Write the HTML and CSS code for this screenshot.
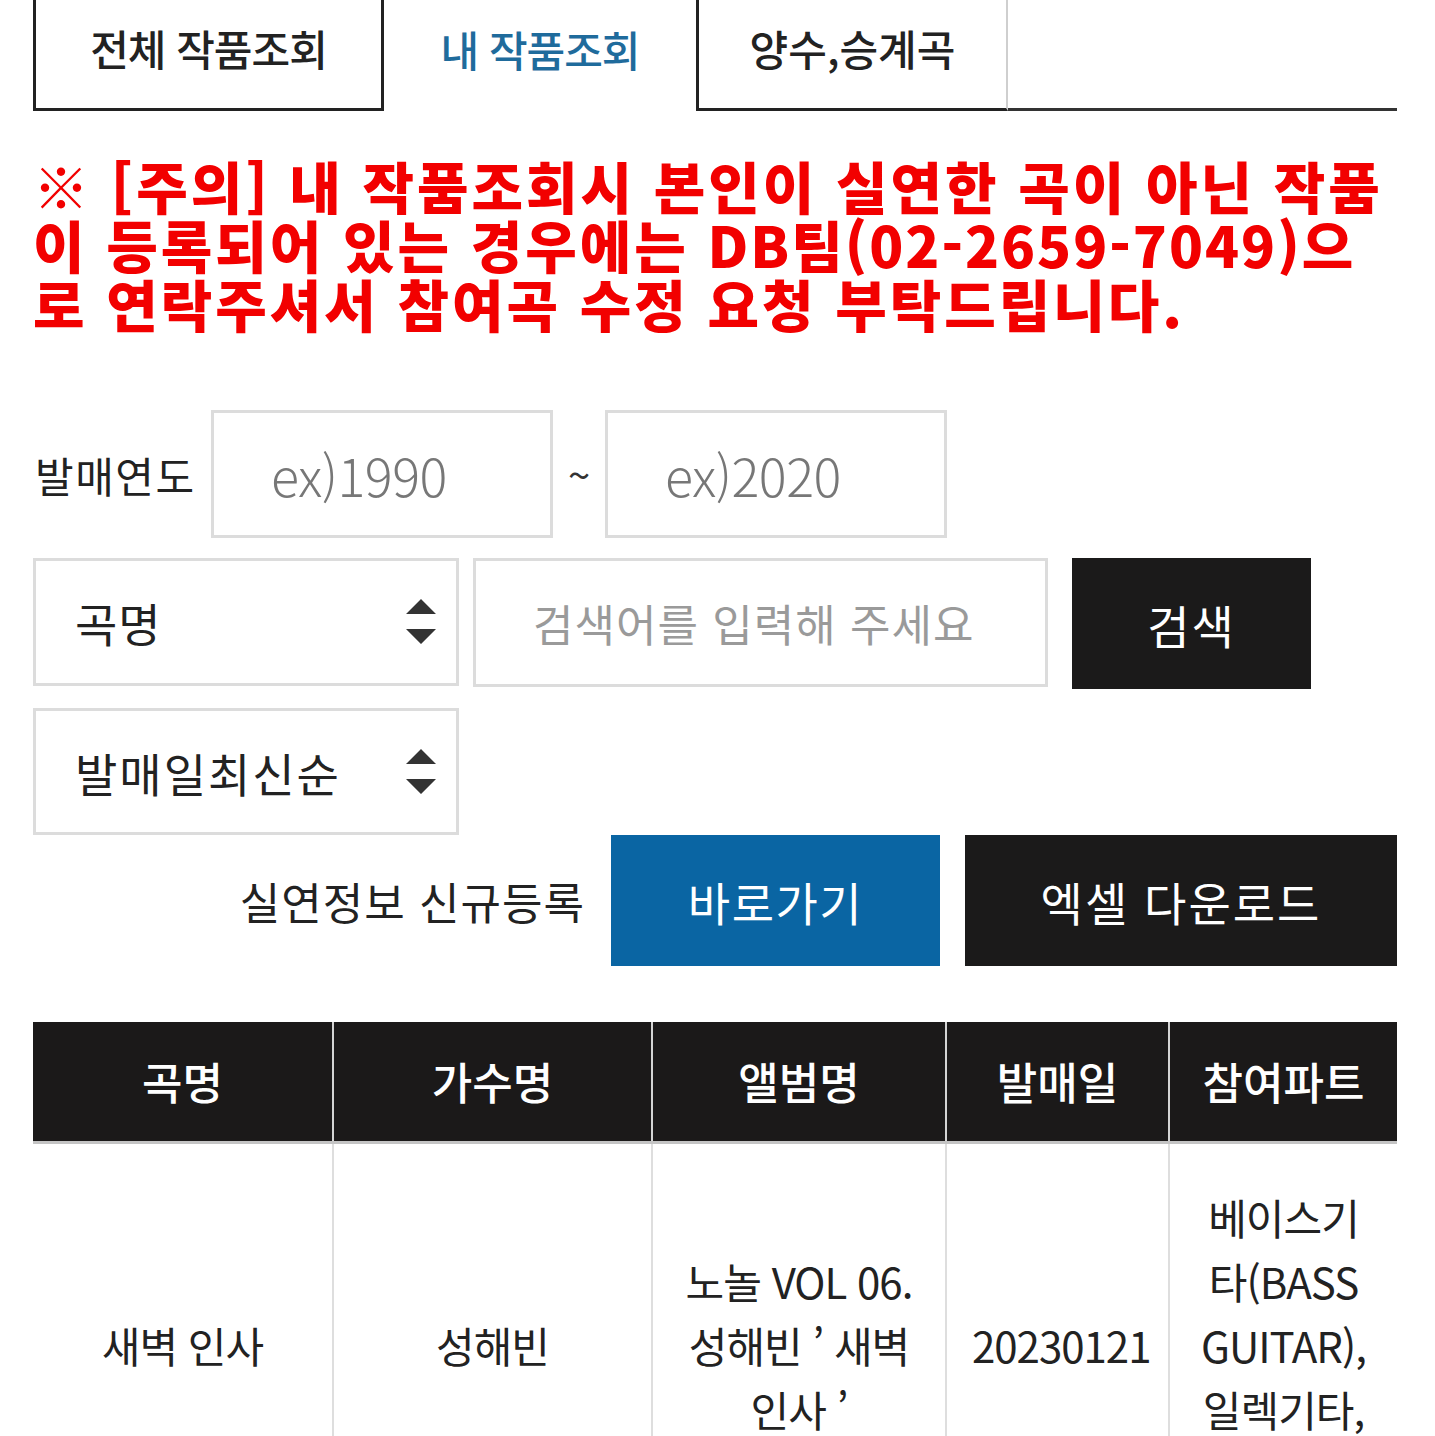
FILE: index.html
```html
<!DOCTYPE html>
<html lang="ko">
<head>
<meta charset="utf-8">
<title>내 작품조회</title>
<link rel="stylesheet" href="styles.css">
</head>
<body>
<div class="page">
  <nav class="tabs">
    <a class="tab tab-all" href="#">전체 작품조회</a>
    <a class="tab tab-mine" href="#">내 작품조회</a>
    <a class="tab tab-transfer" href="#">양수,승계곡</a>
    <span class="tab-fill"></span>
  </nav>

  <p class="notice">※ [주의] 내 작품조회시 본인이 실연한 곡이 아닌 작품이 등록되어 있는 경우에는 <span class="tel">DB팀(02-2659-7049)</span>으로 연락주셔서 참여곡 수정 요청 부탁드립니다.</p>

  <form class="search">
    <div class="row year-row">
      <label class="label">발매연도</label>
      <input class="field year" type="text" placeholder="ex)1990">
      <span class="tilde">~</span>
      <input class="field year" type="text" placeholder="ex)2020">
    </div>
    <div class="row row-keyword">
      <div class="select-wrap">
        <select class="select"><option>곡명</option><option>가수명</option><option>앨범명</option></select>
        <svg class="arrows" width="30" height="45" viewBox="0 0 30 45"><path d="M15 0 L30 15 H0 Z M0 30 H30 L15 45 Z" fill="#333"/></svg>
      </div>
      <input class="field keyword" type="text" placeholder="검색어를 입력해 주세요">
      <button class="btn btn-dark btn-search" type="button">검색</button>
    </div>
    <div class="row row-sort">
      <div class="select-wrap">
        <select class="select select-sort"><option>발매일최신순</option><option>발매일과거순</option></select>
        <svg class="arrows" width="30" height="45" viewBox="0 0 30 45"><path d="M15 0 L30 15 H0 Z M0 30 H30 L15 45 Z" fill="#333"/></svg>
      </div>
    </div>
    <div class="row actions">
      <span class="actions-label">실연정보 신규등록</span>
      <a class="btn btn-blue" href="#">바로가기</a>
      <a class="btn btn-dark btn-excel" href="#">엑셀 다운로드</a>
    </div>
  </form>

  <table class="list">
    <colgroup>
      <col class="c-title"><col class="c-artist"><col class="c-album"><col class="c-date"><col class="c-part">
    </colgroup>
    <thead>
      <tr><th>곡명</th><th>가수명</th><th>앨범명</th><th>발매일</th><th>참여파트</th></tr>
    </thead>
    <tbody>
      <tr>
        <td>새벽 인사</td>
        <td>성해빈</td>
        <td>노놀 VOL 06. 성해빈 ’ 새벽 인사 ’</td>
        <td>20230121</td>
        <td>베이스기타(BASS GUITAR), 일렉기타, 통기타</td>
      </tr>
    </tbody>
  </table>
</div>
</body>
</html>
```

FILE: styles.css
```css
* { box-sizing: border-box; }

body {
  margin: 0;
  background: #fff;
  color: #222;
  font-family: "Noto Sans CJK KR", "Noto Sans", sans-serif;
}

.page {
  padding: 0 38px 0 33px;
}

/* tabs */
.tabs {
  display: flex;
  height: 111px;
}

.tab {
  display: flex;
  align-items: center;
  justify-content: center;
  padding-bottom: 14px;
  font-size: 42px;
  font-weight: 500;
  letter-spacing: -1px;
  color: #222;
  text-decoration: none;
  border-bottom: 3px solid #222;
}

.tab-all {
  width: 351px;
  border-left: 3px solid #222;
  border-right: 3px solid #222;
}

.tab-mine {
  width: 312px;
  border-bottom: 0;
  color: #1f6b9c;
}

.tab-transfer {
  width: 312px;
  border-left: 3px solid #222;
  border-right: 2px solid #cfcfcf;
  letter-spacing: 0;
}

.tab-fill {
  flex: 1;
  border-bottom: 3px solid #333;
}

/* notice */
.notice {
  margin: 44px 0 0;
  color: #f20000;
  font-weight: 900;
  font-size: 56px;
  line-height: 59px;
  letter-spacing: 3px;
}

.notice .tel {
  letter-spacing: 2px;
}

/* search form */
.search {
  display: flex;
  flex-direction: column;
  margin-top: 78px;
}

.row {
  display: flex;
  align-items: flex-start;
}

.year-row {
  align-items: center;
  height: 128px;
}

.label {
  width: 178px;
  padding-left: 2px;
  font-size: 42px;
  letter-spacing: 1.5px;
  color: #222;
}

.field {
  height: 128px;
  border: 3px solid #dcdcdc;
  padding: 0 0 0 57px;
  font-family: inherit;
  color: #222;
  background: #fff;
  outline: none;
  border-radius: 0;
}

.field::placeholder {
  color: #777;
}

.year {
  width: 342px;
  font-size: 52px;
  font-weight: 300;
  letter-spacing: -0.5px;
}

.tilde {
  width: 52px;
  text-align: center;
  font-size: 40px;
  color: #333;
}

.row-keyword {
  margin-top: 20px;
}

.select-wrap {
  position: relative;
  width: 426px;
  height: 128px;
  border: 3px solid #dcdcdc;
  background: #fff;
}

.select {
  appearance: none;
  -webkit-appearance: none;
  width: 100%;
  height: 100%;
  border: 0;
  background: transparent;
  padding: 0 0 0 39px;
  font-family: inherit;
  font-size: 46px;
  letter-spacing: 1px;
  color: #222;
  outline: none;
}

.select-sort {
  letter-spacing: 2px;
}

.arrows {
  position: absolute;
  right: 20px;
  top: 38px;
  pointer-events: none;
}

.keyword {
  width: 575px;
  height: 129px;
  margin-left: 14px;
  font-size: 44px;
  letter-spacing: 1px;
}

.keyword::placeholder {
  color: #9a9a9a;
}

.btn {
  display: flex;
  align-items: center;
  justify-content: center;
  height: 131px;
  border: 0;
  color: #fff;
  font-family: inherit;
  font-size: 46px;
  text-decoration: none;
  letter-spacing: 1.5px;
}

.btn-dark {
  background: #1b1a1a;
}

.btn-search {
  width: 239px;
  margin-left: 24px;
  letter-spacing: 2px;
}

.row-sort {
  margin-top: 19px;
}

.row-sort .select-wrap {
  height: 127px;
}

.actions {
  justify-content: flex-end;
  align-items: center;
}

.actions-label {
  margin-right: 26px;
  font-size: 44px;
  letter-spacing: 1px;
  color: #222;
}

.btn-blue {
  width: 329px;
  background: #0a65a3;
}

.btn-excel {
  width: 432px;
  margin-left: 25px;
  letter-spacing: 2px;
}

/* table */
.list {
  width: 100%;
  margin-top: 56px;
  border-collapse: collapse;
  table-layout: fixed;
}

.c-title { width: 300px; }
.c-artist { width: 319px; }
.c-album { width: 294px; }
.c-date { width: 223px; }
.c-part { width: 228px; }

.list th {
  height: 120px;
  padding: 0;
  background: #1b1919;
  color: #fff;
  font-size: 44px;
  font-weight: 500;
  letter-spacing: 0;
  border-left: 2px solid #d4d4d4;
  border-bottom: 3px solid #c4c4c4;
}

.list td {
  padding: 41px 25px;
  border-left: 2px solid #dedede;
  text-align: center;
  vertical-align: middle;
  font-size: 42px;
  line-height: 64px;
  letter-spacing: -1px;
  color: #222;
}

.list th:first-child,
.list td:first-child {
  border-left: 0;
}
```
